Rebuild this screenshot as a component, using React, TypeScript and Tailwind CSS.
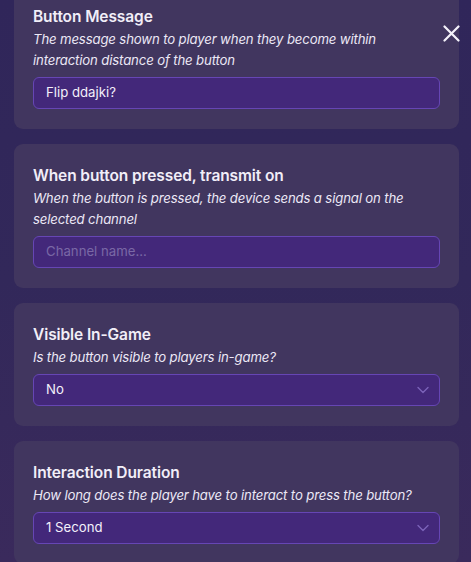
import React from "react";

const Chevron = () => (
  <svg width="12" height="8" viewBox="0 0 12 8" fill="none" className="shrink-0">
    <path d="M1 1.5L6 6.5L11 1.5" stroke="#7b62b8" strokeWidth="1.4" strokeLinecap="round" strokeLinejoin="round" />
  </svg>
);

type CardProps = { title: string; desc: string; children: React.ReactNode };

const Card = ({ title, desc, children }: CardProps) => (
  <div className="rounded-[9px] bg-[#41365f] px-[19px] pt-[20px] pb-[20px]">
    <div className="text-[15.5px] font-semibold leading-[24px] tracking-[-0.1px] text-[#f1eef8]">{title}</div>
    <div className="text-[13.2px] italic leading-[21px] tracking-[-0.15px] text-[#ece8f6] pr-4">{desc}</div>
    <div className="mt-[6px]">{children}</div>
  </div>
);

const Field = ({ value, placeholder, select }: { value?: string; placeholder?: string; select?: boolean }) => (
  <div className="flex h-[32px] items-center justify-between rounded-[6px] border border-[#6646b4] bg-[#43287a] pl-[12px] pr-[10px]">
    {value ? (
      <span className="text-[13.2px] text-[#f3f0fa]">{value}</span>
    ) : (
      <span className="text-[13.2px] text-[#7a68a6]">{placeholder}</span>
    )}
    {select && <Chevron />}
  </div>
);

export default function App() {
  return (
    <div
      className="relative h-[562px] w-[471px] overflow-hidden bg-[#31275a]"
      style={{ fontFamily: 'Inter, "Noto Sans", sans-serif' }}
    >
      <div className="absolute inset-0 bg-gradient-to-b from-[#30265a] via-[#32285a] to-[#3a2a5c]" />
      <div className="relative mt-[-15px] flex flex-col gap-[15px] px-[14px] pr-[12px]">
        <Card
          title="Button Message"
          desc="The message shown to player when they become within interaction distance of the button"
        >
          <Field value="Flip ddajki?" />
        </Card>
        <Card
          title="When button pressed, transmit on"
          desc="When the button is pressed, the device sends a signal on the selected channel"
        >
          <Field placeholder="Channel name..." />
        </Card>
        <Card title="Visible In-Game" desc="Is the button visible to players in-game?">
          <Field value="No" select />
        </Card>
        <Card
          title="Interaction Duration"
          desc="How long does the player have to interact to press the button?"
        >
          <Field value="1 Second" select />
        </Card>
      </div>
      <button className="absolute left-[443px] top-[25px] flex h-[17px] w-[17px] items-center justify-center">
        <svg width="17" height="17" viewBox="0 0 17 17" fill="none">
          <path d="M1.5 1.5L15.5 15.5M15.5 1.5L1.5 15.5" stroke="#f4f2fa" strokeWidth="2.2" strokeLinecap="round" />
        </svg>
      </button>
    </div>
  );
}
